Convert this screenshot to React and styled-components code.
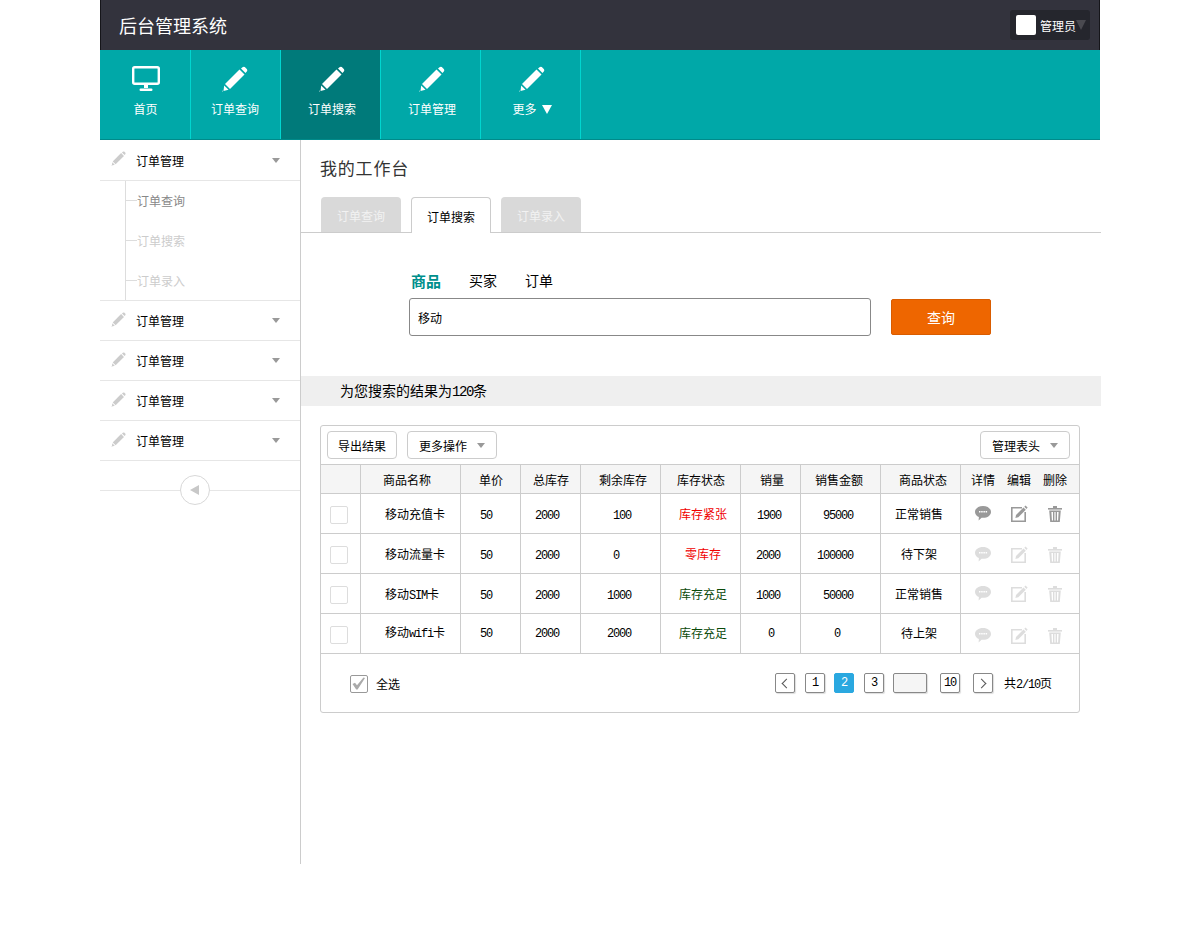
import React from "react";
import styled, { createGlobalStyle } from "styled-components";

const GlobalStyle = createGlobalStyle`
  html, body {
    margin: 0;
    padding: 0;
    background: #fff;
    font-family: "Noto Sans CJK SC", sans-serif;
    font-size: 12px;
    color: #000;
  }
  * { box-sizing: border-box; }
`;

const PencilIcon = ({ size = 26 }) => (
  <svg width={size} height={size} viewBox="0 0 26 26" fill="currentColor">
    <polygon points="3,18 17.5,3.5 22.5,8.5 8,23" />
    <path d="M19 2.5 L20.5 1.2 Q21.5 0.3 22.8 1 L25 3.2 Q25.7 4.5 24.8 5.5 L23.5 7 Z" />
    <polygon points="2.2,19.5 6.5,23.8 1.5,25" />
    <polygon points="1.2,25 0.2,26 0.6,24.4" />
  </svg>
);

const MonitorIcon = () => (
  <svg width="28" height="26" viewBox="0 0 28 26" fill="none">
    <rect x="1.2" y="1.2" width="25.6" height="16.6" rx="1.5" stroke="currentColor" strokeWidth="2.4" />
    <rect x="12" y="19" width="4" height="3" fill="currentColor" />
    <rect x="7.5" y="22.5" width="13" height="2.4" rx="1.2" fill="currentColor" />
  </svg>
);

const BubbleIcon = () => (
  <svg width="16" height="15" viewBox="0 0 16 15" fill="currentColor">
    <path d="M8 0 C12.5 0 16 2.6 16 5.9 C16 9.2 12.5 11.8 8 11.8 L6.6 11.8 L3.6 14.6 L3.9 11 C1.6 10 0 8.1 0 5.9 C0 2.6 3.5 0 8 0 Z" />
    <g fill="#fff">
      <rect x="4" y="5" width="1.5" height="1.5" />
      <rect x="6.2" y="5" width="1.5" height="1.5" />
      <rect x="8.4" y="5" width="1.5" height="1.5" />
      <rect x="10.6" y="5" width="1.5" height="1.5" />
    </g>
  </svg>
);

const EditIcon = () => (
  <svg width="17" height="17" viewBox="0 0 17 17">
    <path d="M11 2.8 H0.8 V16.2 H14.2 V7" fill="none" stroke="currentColor" strokeWidth="1.6" />
    <polygon points="5,10 12.5,2.5 14.8,4.8 7.3,12.3 4.4,13" fill="currentColor" />
    <polygon points="13.3,1.7 14.5,0.6 16.6,2.6 15.5,3.9" fill="currentColor" />
  </svg>
);

const TrashIcon = () => (
  <svg width="14" height="16" viewBox="0 0 14 16" fill="currentColor">
    <rect x="0" y="2" width="14" height="1.6" />
    <rect x="5" y="0" width="4" height="2" />
    <path d="M1.2 4.4 H12.8 L11.8 16 H2.2 Z M3.4 6 L3.9 14.4 H5 V6 Z M6.4 6 V14.4 H7.6 V6 Z M9 6 V14.4 H10.1 L10.6 6 Z" fillRule="evenodd" />
  </svg>
);

const CheckIcon = () => (
  <svg width="14" height="13" viewBox="0 0 14 13" fill="#aaa">
    <path d="M0.5 7 L3 5.8 L5 8.2 L11.5 0.5 L13 1 L5.6 12.5 L4.2 12.5 Z" />
  </svg>
);

const Page = styled.div`
  width: 1000px;
  margin: 0 auto;
`;

const TopBar = styled.header`
  height: 50px;
  background: #33333d;
  border-left: 1px solid #15151a;
  border-right: 1px solid #15151a;
  display: flex;
  align-items: center;
  justify-content: space-between;
  padding: 0 9px 0 18px;
`;

const Brand = styled.div`
  font-size: 18px;
  line-height: 50px;
  color: #fff;
`;

const UserChip = styled.div`
  width: 80px;
  height: 30px;
  background: #25262d;
  border-radius: 3px;
  display: flex;
  align-items: center;
  padding-left: 6px;
  color: #fff;
`;

const Avatar = styled.div`
  width: 20px;
  height: 20px;
  background: #fff;
  border-radius: 2px;
  margin-right: 4px;
`;

const Caret = styled.span`
  display: inline-block;
  width: 0;
  height: 0;
  border-left: ${(p) => p.$w || 4.5}px solid transparent;
  border-right: ${(p) => p.$w || 4.5}px solid transparent;
  border-top: ${(p) => p.$h || 5}px solid ${(p) => p.$color || "#999"};
`;

const NavBar = styled.nav`
  height: 90px;
  background: #00a8a8;
  border-bottom: 1px solid #008a8a;
  display: flex;
`;

const NavItem = styled.div`
  width: ${(p) => p.$w}px;
  height: 89px;
  padding: 16px ${(p) => p.$trim || 0}px 0 ${(p) => p.$shift || 0}px;
  background: ${(p) => (p.$active ? "#007a7a" : "transparent")};
  border-right: 1px solid #00d6d0;
  color: #fff;
  display: flex;
  flex-direction: column;
  align-items: center;
`;

const NavLabel = styled.div`
  margin-top: 8px;
  line-height: 18px;
  display: flex;
  align-items: center;
  gap: ${(p) => (p.$more ? 5 : 0)}px;
`;

const Body = styled.div`
  display: flex;
  min-height: 724px;
`;

const Sidebar = styled.aside`
  flex: 0 0 201px;
  border-right: 1px solid #ccc;
`;

const MenuRow = styled.div`
  height: ${(p) => (p.$first ? 41 : 40)}px;
  padding: 0 20px 0 11px;
  border-bottom: 1px solid #e6e6e6;
  display: flex;
  align-items: center;
  color: #000;
`;

const MenuIcon = styled.span`
  display: flex;
  color: #ccc;
  margin: 0 11px 3px 0;
`;

const MenuText = styled.span`
  flex: 1;
  margin-left: -1px;
`;

const SubMenu = styled.div`
  height: 119px;
  margin-left: 25px;
  border-left: 1px solid #ddd;
`;

const SubLine = styled.div`
  height: 40px;
  padding-bottom: 2px;
  display: flex;
  align-items: center;
  color: ${(p) => p.$color};
  &::before {
    content: "";
    width: 11px;
    height: 1px;
    background: #ddd;
  }
`;

const SubDivider = styled.div`
  height: 1px;
  background: #e6e6e6;
`;

const Collapse = styled.div`
  height: 30px;
  margin-top: 14px;
  display: flex;
  align-items: center;
  justify-content: center;
  background: linear-gradient(#e6e6e6, #e6e6e6) center / 100% 1px no-repeat;
`;

const CollapseButton = styled.div`
  width: 30px;
  height: 30px;
  margin-right: 10px;
  border: 1px solid #d8d8d8;
  border-radius: 50%;
  background: #fff;
  display: flex;
  align-items: center;
  justify-content: center;
  padding-right: 2px;
  &::before {
    content: "";
    border-top: 5px solid transparent;
    border-bottom: 5px solid transparent;
    border-right: 9px solid #c8c8c8;
  }
`;

const Main = styled.main`
  flex: 0 0 800px;
`;

const Title = styled.h1`
  height: 57px;
  margin: 0;
  padding: 15px 0 0 19px;
  font-size: 17px;
  line-height: 26px;
  font-weight: 400;
  color: #333;
  letter-spacing: 0.8px;
`;

const TabBar = styled.div`
  height: 36px;
  padding-left: 20px;
  border-bottom: 1px solid #ccc;
  display: flex;
  gap: 10px;
`;

const Tab = styled.div`
  width: 80px;
  height: ${(p) => (p.$active ? 36 : 35)}px;
  padding-top: 3px;
  line-height: 32px;
  text-align: center;
  border-radius: 4px 4px 0 0;
  background: ${(p) => (p.$active ? "#fff" : "#d9d9d9")};
  color: ${(p) => (p.$active ? "#000" : "#f2f2f2")};
  border: ${(p) => (p.$active ? "1px solid #ccc" : "0")};
  border-bottom: 0;
`;

const SearchArea = styled.section`
  height: 143px;
  padding: 37px 0 0 108px;
`;

const SearchTypes = styled.div`
  height: 20px;
  padding-left: 2px;
  margin-bottom: 8px;
  display: flex;
  align-items: center;
  gap: 28px;
  font-size: 14px;
`;

const SearchType = styled.span`
  font-size: ${(p) => (p.$active ? 15 : 14)}px;
  font-weight: ${(p) => (p.$active ? 700 : 400)};
  color: ${(p) => (p.$active ? "#008f8c" : "#000")};
`;

const SearchRow = styled.div`
  display: flex;
  align-items: center;
  gap: 20px;
`;

const SearchInput = styled.input`
  width: 462px;
  height: 38px;
  padding: 0 8px;
  border: 1px solid #888;
  border-radius: 3px;
  font: 12px "Noto Sans CJK SC", sans-serif;
  color: #000;
  outline: none;
`;

const SearchButton = styled.button`
  width: 100px;
  height: 36px;
  border: 1px solid #d95c00;
  border-radius: 2px;
  background: #ee6600;
  color: #fff;
  font: 14px "Noto Sans CJK SC", sans-serif;
`;

const ResultBar = styled.div`
  height: 30px;
  padding-left: 39px;
  line-height: 28px;
  background: #efefef;
  font-size: 14px;
  color: #000;
`;

const Latin = styled.span`
  font-family: "Liberation Mono", monospace;
  font-size: ${(p) => p.$size || 12}px;
  letter-spacing: ${(p) => (p.$size ? -p.$size * 0.1 : -1.2)}px;
`;

const Card = styled.section`
  width: 760px;
  margin: 19px 0 0 19px;
  border: 1px solid #ccc;
  border-radius: 3px;
`;

const Toolbar = styled.div`
  height: 38px;
  padding: 5px 9px 0 6px;
  display: flex;
  gap: 10px;
`;

const ToolButton = styled.div`
  width: ${(p) => p.$w}px;
  height: 28px;
  margin-left: ${(p) => (p.$right ? "auto" : 0)};
  border: 1px solid #ccc;
  border-radius: 4px;
  display: flex;
  align-items: center;
  justify-content: center;
  gap: 10px;
  color: #000;
`;

const Table = styled.table`
  width: 758px;
  table-layout: fixed;
  border-collapse: separate;
  border-spacing: 0;
  border-top: 1px solid #ccc;
`;

const Th = styled.th`
  height: 29px;
  padding: 0 0 0 ${(p) => p.$pad || 0}px;
  background: #f5f5f5;
  font-weight: 400;
  text-align: left;
  border-right: 1px solid #ccc;
  border-bottom: 1px solid #ccc;
  &:last-child { border-right: 0; }
`;

const Td = styled.td`
  height: 40px;
  padding: 0 0 ${(p) => p.$lift || 0}px ${(p) => p.$pad || 0}px;
  text-align: left;
  color: ${(p) => p.$color || "#000"};
  border-right: 1px solid #ccc;
  border-bottom: 1px solid #ccc;
  &:last-child { border-right: 0; }
`;

const RowBox = styled.div`
  width: 18px;
  height: 18px;
  margin: 2px 0 0 9px;
  border: 1px solid #ddd;
  border-radius: 2px;
`;

const ActionGrid = styled.div`
  padding-left: 4px;
  display: grid;
  grid-template-columns: repeat(3, 36px);
  justify-items: center;
  align-items: center;
  color: ${(p) => p.$color || "inherit"};
  margin-top: ${(p) => p.$drop || 0}px;
`;

const Footer = styled.div`
  height: 58px;
  padding-left: 29px;
  display: flex;
  align-items: center;
`;

const AllBox = styled.div`
  width: 18px;
  height: 18px;
  margin: 1px 8px 0 0;
  border: 1px solid #999;
  border-radius: 2px;
  display: flex;
  align-items: center;
  justify-content: center;
`;

const Pager = styled.div`
  margin-left: auto;
  padding-right: 27px;
  display: flex;
  align-items: center;
`;

const PageButton = styled.div`
  width: ${(p) => p.$w || 20}px;
  height: 20px;
  margin-left: ${(p) => p.$gap || 0}px;
  border: 1px solid ${(p) => (p.$active ? "#2aa8e0" : "#888")};
  border-radius: 2px;
  background: ${(p) => (p.$active ? "#2aa8e0" : p.$blank ? "#f5f5f5" : "#fff")};
  color: ${(p) => (p.$active ? "#fff" : "#000")};
  box-shadow: ${(p) => (p.$active ? "none" : "1px 1px 1px #ddd")};
  display: flex;
  align-items: center;
  justify-content: center;
`;

const PageTotal = styled.span`
  margin-left: 11px;
`;

const Arrow = styled.span`
  width: 7px;
  height: 7px;
  border-left: 1px solid #555;
  border-bottom: 1px solid #555;
  transform: rotate(${(p) => (p.$next ? 225 : 45)}deg);
  margin-${(p) => (p.$next ? "right" : "left")}: 3px;
`;

const navItems = [
  { label: "首页", w: 91, home: true, shift: 1 },
  { label: "订单查询", w: 90, trim: 1 },
  { label: "订单搜索", w: 100, active: true, shift: 3 },
  { label: "订单管理", w: 100, shift: 3 },
  { label: "更多", w: 100, shift: 3, more: true },
];

const headers = [
  ["", 0],
  ["商品名称", 22],
  ["单价", 18],
  ["总库存", 12],
  ["剩余库存", 18],
  ["库存状态", 16],
  ["销量", 19],
  ["销售金额", 14],
  ["商品状态", 18],
];

const GREEN = "#0a4a0a";
const RED = "#f00000";

const rows = [
  {
    name: ["移动充值卡"], price: "50", total: "2000",
    left: ["100", 32], stock: ["库存紧张", 18, RED], sold: ["1900", 16],
    amount: ["95000", 22], state: ["正常销售", 14], iconColor: "#999", drop: 0, lift: 0,
  },
  {
    name: ["移动流量卡"], price: "50", total: "2000",
    left: ["0", 32], stock: ["零库存", 24, RED], sold: ["2000", 15],
    amount: ["100000", 16], state: ["待下架", 20], iconColor: "#ddd", drop: 2, lift: 0,
  },
  {
    name: ["移动", "SIM", "卡"], price: "50", total: "2000",
    left: ["1000", 26], stock: ["库存充足", 18, GREEN], sold: ["1000", 15],
    amount: ["50000", 22], state: ["正常销售", 14], iconColor: "#ddd", drop: 0, lift: 0,
  },
  {
    name: ["移动", "wifi", "卡"], price: "50", total: "2000",
    left: ["2000", 26], stock: ["库存充足", 18, GREEN], sold: ["0", 27],
    amount: ["0", 33], state: ["待上架", 20], iconColor: "#ddd", drop: 4, lift: 3,
  },
];

const App = () => {
  return (
    <Page>
      <GlobalStyle />
      <TopBar>
        <Brand>后台管理系统</Brand>
        <UserChip>
          <Avatar />
          管理员
          <Caret $w={5} $h={10} $color="#4a4a50" />
        </UserChip>
      </TopBar>

      <NavBar>
        {navItems.map((item) => (
          <NavItem key={item.label} $w={item.w} $active={item.active} $shift={item.shift} $trim={item.trim}>
            {item.home ? <MonitorIcon /> : <PencilIcon />}
            <NavLabel $more={item.more}>
              {item.label}
              {item.more && <Caret $w={5.5} $h={9} $color="#fff" />}
            </NavLabel>
          </NavItem>
        ))}
      </NavBar>

      <Body>
        <Sidebar>
          <MenuRow $first>
            <MenuIcon><PencilIcon size={15} /></MenuIcon>
            <MenuText>订单管理</MenuText>
            <Caret />
          </MenuRow>
          <SubMenu>
            <SubLine $color="#888">订单查询</SubLine>
            <SubLine $color="#ccc">订单搜索</SubLine>
            <SubLine $color="#ccc">订单录入</SubLine>
          </SubMenu>
          <SubDivider />
          {[1, 2, 3, 4].map((n) => (
            <MenuRow key={n}>
              <MenuIcon><PencilIcon size={15} /></MenuIcon>
              <MenuText>订单管理</MenuText>
              <Caret />
            </MenuRow>
          ))}
          <Collapse>
            <CollapseButton />
          </Collapse>
        </Sidebar>

        <Main>
          <Title>我的工作台</Title>
          <TabBar>
            <Tab>订单查询</Tab>
            <Tab $active>订单搜索</Tab>
            <Tab>订单录入</Tab>
          </TabBar>

          <SearchArea>
            <SearchTypes>
              <SearchType $active>商品</SearchType>
              <SearchType>买家</SearchType>
              <SearchType>订单</SearchType>
            </SearchTypes>
            <SearchRow>
              <SearchInput defaultValue="移动" />
              <SearchButton>查询</SearchButton>
            </SearchRow>
          </SearchArea>

          <ResultBar>
            为您搜索的结果为<Latin $size={14}>120</Latin>条
          </ResultBar>

          <Card>
            <Toolbar>
              <ToolButton $w={70}>导出结果</ToolButton>
              <ToolButton $w={90}>更多操作<Caret /></ToolButton>
              <ToolButton $w={90} $right>管理表头<Caret /></ToolButton>
            </Toolbar>

            <Table>
              <colgroup>
                {[40, 100, 60, 60, 80, 80, 60, 80, 80, 118].map((w, i) => (
                  <col key={i} width={w} />
                ))}
              </colgroup>
              <thead>
                <tr>
                  {headers.map(([text, pad]) => (
                    <Th key={text || "check"} $pad={pad}>{text}</Th>
                  ))}
                  <Th>
                    <ActionGrid>
                      <span>详情</span>
                      <span>编辑</span>
                      <span>删除</span>
                    </ActionGrid>
                  </Th>
                </tr>
              </thead>
              <tbody>
                {rows.map((row, i) => (
                  <tr key={i}>
                    <Td><RowBox /></Td>
                    <Td $pad={24} $lift={row.lift}>
                      {row.name.length === 1 ? row.name[0] : (
                        <>
                          {row.name[0]}<Latin>{row.name[1]}</Latin>{row.name[2]}
                        </>
                      )}
                    </Td>
                    <Td $pad={19} $lift={row.lift}><Latin>{row.price}</Latin></Td>
                    <Td $pad={14} $lift={row.lift}><Latin>{row.total}</Latin></Td>
                    <Td $pad={row.left[1]} $lift={row.lift}><Latin>{row.left[0]}</Latin></Td>
                    <Td $pad={row.stock[1]} $color={row.stock[2]} $lift={row.lift}>{row.stock[0]}</Td>
                    <Td $pad={row.sold[1]} $lift={row.lift}><Latin>{row.sold[0]}</Latin></Td>
                    <Td $pad={row.amount[1]} $lift={row.lift}><Latin>{row.amount[0]}</Latin></Td>
                    <Td $pad={row.state[1]} $lift={row.lift}>{row.state[0]}</Td>
                    <Td>
                      <ActionGrid $color={row.iconColor} $drop={row.drop}>
                        <BubbleIcon />
                        <EditIcon />
                        <TrashIcon />
                      </ActionGrid>
                    </Td>
                  </tr>
                ))}
              </tbody>
            </Table>

            <Footer>
              <AllBox><CheckIcon /></AllBox>
              全选
              <Pager>
                <PageButton><Arrow /></PageButton>
                <PageButton $gap={10}><Latin>1</Latin></PageButton>
                <PageButton $gap={9} $active><Latin>2</Latin></PageButton>
                <PageButton $gap={10}><Latin>3</Latin></PageButton>
                <PageButton $gap={9} $w={34} $blank />
                <PageButton $gap={13}><Latin>10</Latin></PageButton>
                <PageButton $gap={13}><Arrow $next /></PageButton>
                <PageTotal>共<Latin>2/10</Latin>页</PageTotal>
              </Pager>
            </Footer>
          </Card>
        </Main>
      </Body>
    </Page>
  );
};

export default App;
